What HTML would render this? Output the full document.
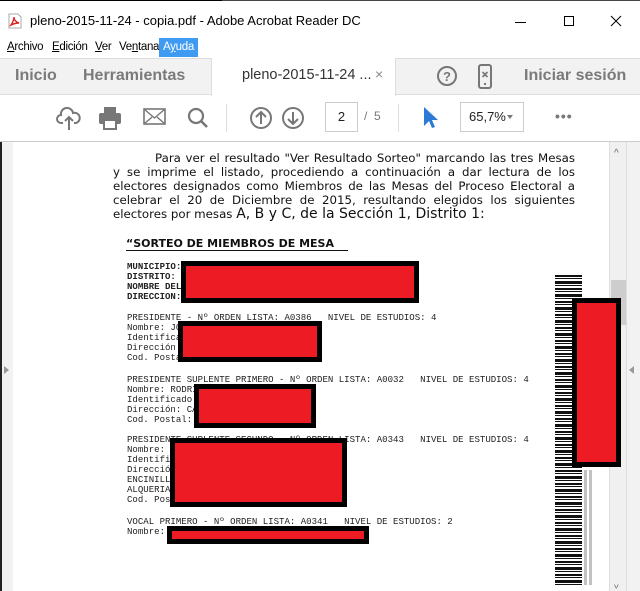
<!DOCTYPE html>
<html><head><meta charset="utf-8"><style>
*{margin:0;padding:0;box-sizing:border-box}
body{width:640px;height:591px;overflow:hidden;background:#fff;font-family:"Liberation Sans",sans-serif;position:relative}
.a{position:absolute}
.mono{font-family:"Liberation Mono",monospace;font-size:9.05px;line-height:10px;color:#222;white-space:pre;position:absolute;left:127px}
.red{position:absolute;background:#ed1c24;border:5px solid #000}
.ico{position:absolute}
.m{position:absolute;top:3px;white-space:nowrap;letter-spacing:-0.3px}
</style></head><body>
<div class="a" style="left:0;top:0;width:640px;height:38px;background:#fff;border-top:1px solid #444"></div>
<div class="a" style="left:0;top:0;width:222px;height:1px;background:#000"></div>
<svg class="ico" style="left:8px;top:13px" width="14" height="16"><path d="M1 1h9l3 3v11H1z" fill="#fff" stroke="#aaa"/><path d="M3 12c2-3 3-6 3-8c0 3 2 5 5 6c-3 0-6 1-8 2z" fill="none" stroke="#d22" stroke-width="1.4"/></svg>
<div class="a" style="left:30px;top:13px;font-size:13px;color:#000">pleno-2015-11-24 - copia.pdf - Adobe Acrobat Reader DC</div>
<div class="a" style="left:515px;top:22px;width:11px;height:1px;background:#000"></div>
<div class="a" style="left:564px;top:16px;width:10px;height:10px;border:1px solid #000"></div>
<svg class="ico" style="left:610px;top:15px" width="12" height="12"><path d="M1 1L11 11M11 1L1 11" stroke="#000"/></svg>
<div class="a" style="left:0;top:38px;width:640px;height:20px;font-size:11.5px;color:#000">
<span class="m" style="left:7px"><u>A</u>rchivo</span>
<span class="m" style="left:52px"><u>E</u>dición</span>
<span class="m" style="left:95px"><u>V</u>er</span>
<span class="m" style="left:119px">Ve<u>n</u>tana</span>
<span class="a" style="left:159px;top:0;width:39px;height:19px;background:#3f9bf2;color:#fff;padding:3px 0 0 4px;letter-spacing:-0.3px">A<u>y</u>uda</span>
</div>
<div class="a" style="left:0;top:58px;width:640px;height:37px;background:#f2f2f2;border-top:1px solid #ddd;border-bottom:1px solid #ddd"></div>
<div class="a" style="left:211px;top:58px;width:185px;height:38px;background:#fff;border-left:1px solid #ddd;border-right:1px solid #ddd"></div>
<div class="a" style="left:15px;top:67px;font-size:16px;color:#666;font-weight:bold;opacity:.85">Inicio</div>
<div class="a" style="left:83px;top:67px;font-size:16px;color:#666;font-weight:bold;opacity:.85">Herramientas</div>
<div class="a" style="left:242px;top:67px;font-size:14.5px;color:#333">pleno-2015-11-24 ...</div>
<div class="a" style="left:375px;top:66px;font-size:14px;color:#888">×</div>
<svg class="ico" style="left:436px;top:65px" width="22" height="22"><circle cx="11" cy="11" r="9" fill="none" stroke="#777" stroke-width="2"/><text x="11" y="16" text-anchor="middle" font-size="13" font-weight="bold" fill="#777" font-family="Liberation Sans">?</text></svg>
<svg class="ico" style="left:477px;top:64px" width="16" height="26"><rect x="2" y="1" width="12" height="23" rx="2" fill="none" stroke="#777" stroke-width="2"/><path d="M5.5 8l5 5M10.5 8l-5 5" stroke="#777" stroke-width="1.6"/><rect x="7" y="19" width="2" height="2" fill="#777"/></svg>
<div class="a" style="left:524px;top:67px;font-size:16px;color:#666;font-weight:bold;opacity:.85">Iniciar sesión</div>
<svg class="ico" style="left:56px;top:105px" width="26" height="26"><path d="M7 18H5a4 4 0 0 1 0-8a6 6 0 0 1 12-2a5 5 0 0 1 3 10h-2" fill="none" stroke="#777" stroke-width="2"/><path d="M13 25V12M9 16l4-4l4 4" fill="none" stroke="#777" stroke-width="2"/></svg>
<svg class="ico" style="left:98px;top:106px" width="26" height="24"><rect x="6" y="1" width="12" height="6" fill="#777"/><rect x="1" y="7" width="22" height="11" rx="2" fill="#777"/><rect x="6" y="14" width="12" height="9" fill="#fff" stroke="#777" stroke-width="2"/></svg>
<svg class="ico" style="left:143px;top:107px" width="24" height="20"><rect x="1" y="2" width="21" height="15" fill="none" stroke="#777" stroke-width="1.6"/><path d="M1 2l10.5 9L22 2M1 17l8-7M22 17l-8-7" fill="none" stroke="#777" stroke-width="1.4"/></svg>
<svg class="ico" style="left:186px;top:106px" width="24" height="24"><circle cx="10" cy="10" r="7" fill="none" stroke="#777" stroke-width="2.2"/><path d="M15 15l6 6" stroke="#777" stroke-width="2.6"/></svg>
<div class="a" style="left:226px;top:104px;width:1px;height:28px;background:#ddd"></div>
<svg class="ico" style="left:249px;top:106px" width="24" height="24"><circle cx="12" cy="12" r="10" fill="none" stroke="#777" stroke-width="2"/><path d="M12 18V6M7 11l5-5l5 5" fill="none" stroke="#777" stroke-width="2"/></svg>
<svg class="ico" style="left:281px;top:106px" width="24" height="24"><circle cx="12" cy="12" r="10" fill="none" stroke="#777" stroke-width="2"/><path d="M12 6v12M7 13l5 5l5-5" fill="none" stroke="#777" stroke-width="2"/></svg>
<div class="a" style="left:325px;top:102px;width:33px;height:30px;border:1px solid #ccc;font-size:13px;text-align:center;line-height:28px;color:#222">2</div>
<div class="a" style="left:364px;top:109px;font-size:12px;color:#777">/&nbsp;&nbsp;5</div>
<div class="a" style="left:398px;top:104px;width:1px;height:28px;background:#ddd"></div>
<svg class="ico" style="left:422px;top:106px" width="16" height="24"><path d="M2 1v19l5-5l3 7l3-1l-3-7h6z" fill="#2d7ad6"/></svg>
<div class="a" style="left:460px;top:102px;width:64px;height:30px;border:1px solid #ccc;font-size:13px;line-height:28px;padding-left:8px;color:#222">65,7%</div>
<div class="a" style="left:507px;top:115px;width:0;height:0;border-left:3.5px solid transparent;border-right:3.5px solid transparent;border-top:4px solid #777"></div>
<div class="a" style="left:555px;top:108px;font-size:14px;color:#777;letter-spacing:1px;font-weight:bold">•••</div>
<div class="a" style="left:0;top:141px;width:640px;height:1px;background:#ccc"></div>
<div class="a" style="left:0;top:142px;width:2px;height:449px;background:#222"></div>
<div class="a" style="left:2px;top:142px;width:11px;height:449px;background:#f2f2f2"></div>
<div class="a" style="left:4px;top:366px;width:0;height:0;border-top:4px solid transparent;border-bottom:4px solid transparent;border-left:5px solid #999"></div>
<div class="a" style="left:609px;top:142px;width:18px;height:449px;background:#f0f0f0;border-left:1px solid #ddd;border-right:1px solid #ddd"></div>
<div class="a" style="left:611px;top:280px;width:15px;height:45px;background:#cdcdcd"></div>
<div class="a" style="left:614px;top:148px;font-size:10px;color:#666">^</div>
<div class="a" style="left:614px;top:578px;font-size:10px;color:#666;transform:scaleY(-1)">^</div>
<div class="a" style="left:627px;top:142px;width:13px;height:449px;background:#f2f2f2"></div>
<div class="a" style="left:629px;top:366px;width:0;height:0;border-top:4px solid transparent;border-bottom:4px solid transparent;border-right:5px solid #999"></div>
<div class="a" style="left:113px;top:151px;width:462px;font-family:'DejaVu Sans',sans-serif;font-size:11.8px;line-height:14px;color:#111;text-align:justify;text-align-last:left;text-indent:42px">Para ver el resultado "Ver Resultado Sorteo" marcando las tres Mesas y se imprime el listado, procediendo a continuación a dar lectura de los electores designados como Miembros de las Mesas del Proceso Electoral a celebrar el 20 de Diciembre de 2015, resultando elegidos los siguientes electores por mesas <span style="font-size:14px">A, B y C, de la Sección 1, Distrito 1:</span></div>
<div class="a" style="left:126px;top:237px;width:222px;font-family:'DejaVu Sans',sans-serif;font-size:11px;font-weight:bold;color:#111;border-bottom:1.5px solid #111;line-height:13px">“SORTEO DE MIEMBROS DE MESA</div>
<div class="mono" style="top:262px;font-weight:bold">MUNICIPIO:
DISTRITO:
NOMBRE DEL
DIRECCION:</div>
<div class="mono" style="top:313px">PRESIDENTE - Nº ORDEN LISTA: A0386   NIVEL DE ESTUDIOS: 4
Nombre: JO
Identifica
Dirección:                      E
Cod. Posta</div>
<div class="mono" style="top:375px">PRESIDENTE SUPLENTE PRIMERO - Nº ORDEN LISTA: A0032   NIVEL DE ESTUDIOS: 4
Nombre: RODRI
Identificado
Dirección: CA
Cod. Postal:</div>
<div class="mono" style="top:435px">PRESIDENTE SUPLENTE SEGUNDO - Nº ORDEN LISTA: A0343   NIVEL DE ESTUDIOS: 4
Nombre:
Identifi
Direcció
ENCINILL
ALQUERIA
Cod. Pos</div>
<div class="mono" style="top:517px">VOCAL PRIMERO - Nº ORDEN LISTA: A0341   NIVEL DE ESTUDIOS: 2
Nombre:</div>
<div class="a" style="left:555px;top:275px;width:27px;height:310px;background:repeating-linear-gradient(180deg,#111 0 2px,#fff 2px 3px,#111 3px 4px,#fff 4px 6px,#111 6px 9px,#fff 9px 10px,#111 10px 11px,#fff 11px 13px)"></div>
<div class="a" style="left:584px;top:470px;width:8px;height:115px;background:repeating-linear-gradient(90deg,#999 0 3px,#fff 3px 5px);opacity:.6"></div>
<div class="red" style="left:181px;top:261px;width:238px;height:42px"></div>
<div class="red" style="left:178px;top:321px;width:144px;height:41px"></div>
<div class="red" style="left:194px;top:384px;width:122px;height:44px"></div>
<div class="red" style="left:170px;top:438px;width:177px;height:69px"></div>
<div class="red" style="left:167px;top:526px;width:202px;height:18px"></div>
<div class="red" style="left:572px;top:298px;width:49px;height:169px"></div>
</body></html>
